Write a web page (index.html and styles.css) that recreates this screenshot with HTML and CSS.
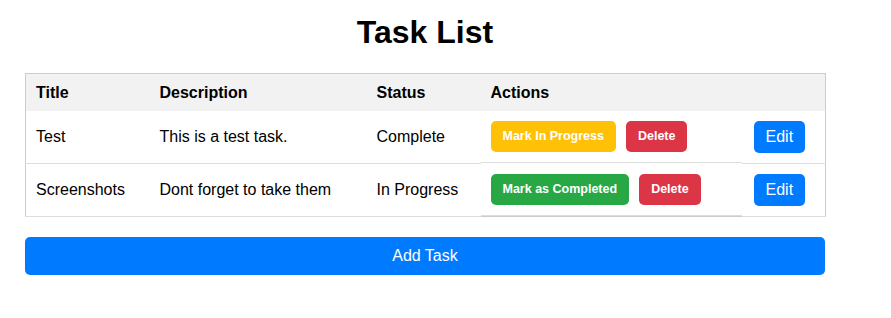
FILE: index.html
```html
<html lang="en">
  <head>
    <meta charset="UTF-8" />
    <meta name="viewport" content="width=device-width, initial-scale=1.0" />
    <title>Task List</title>

    <link rel="stylesheet" href="styles.css">
  </head>
  <body>
    <div class="container">
      <h1>Task List</h1>

      <table class="task-table">
        <colgroup>
          <col class="col-title" />
          <col class="col-desc" />
          <col class="col-status" />
          <col class="col-actions" />
          <col class="col-edit" />
        </colgroup>
        <thead>
          <tr>
            <th>Title</th>
            <th>Description</th>
            <th>Status</th>
            <th colspan="2">Actions</th>
          </tr>
        </thead>
        <tbody>
          <tr>
            <td>Test</td>
            <td>This is a test task.</td>
            <td>Complete</td>
            <td class="actions">
              <button class="btn btn-warning">Mark In Progress</button>
              <button class="btn btn-danger">Delete</button>
            </td>
            <td class="edit-cell"><button class="btn-edit">Edit</button></td>
          </tr>
          <tr>
            <td>Screenshots</td>
            <td>Dont forget to take them</td>
            <td>In Progress</td>
            <td class="actions">
              <button class="btn btn-success">Mark as Completed</button>
              <button class="btn btn-danger">Delete</button>
            </td>
            <td class="edit-cell"><button class="btn-edit">Edit</button></td>
          </tr>
        </tbody>
      </table>

      <button class="add-task">Add Task</button>
    </div>
  </body>
</html>
```

FILE: styles.css
```css
body {
  margin: 0;
  padding: 14px 25px;
  font-family: "Liberation Sans", Arial, sans-serif;
  color: #000;
}

.container {
  width: 800px;
}

h1 {
  text-align: center;
  font-size: 32px;
  margin: 0 0 22px;
}

.task-table {
  width: 100%;
  border-collapse: collapse;
  table-layout: fixed;
  border: 1px solid #ccc;
}

.col-title { width: 124px; }
.col-desc { width: 217px; }
.col-status { width: 114px; }
.col-actions { width: 261px; }
.col-edit { width: 84px; }

.task-table th,
.task-table td {
  padding: 10px;
  text-align: left;
  font-size: 16px;
}

.task-table th {
  padding-bottom: 9px;
  background-color: #f2f2f2;
}

.task-table td {
  border-bottom: 1px solid #ddd;
}

.task-table td.actions {
  display: flex;
  gap: 10px;
}

.task-table td.edit-cell {
  padding-left: 12px;
}

.btn {
  border: none;
  border-radius: 5px;
  padding: 8px 12px;
  font-family: inherit;
  font-size: 12.5px;
  line-height: 15px;
  font-weight: bold;
  color: white;
  cursor: pointer;
}

.btn-warning { background-color: #ffc107; }
.btn-success { background-color: #28a745; }
.btn-danger { background-color: #dc3545; }

.btn-edit {
  border: none;
  border-radius: 5px;
  padding: 7px 12px;
  font-family: inherit;
  font-size: 16px;
  line-height: 18px;
  color: white;
  background-color: #007bff;
  cursor: pointer;
}

.add-task {
  display: block;
  width: 100%;
  margin-top: 20px;
  padding: 10px;
  border: none;
  border-radius: 5px;
  font-family: inherit;
  font-size: 16px;
  color: white;
  background-color: #007bff;
  cursor: pointer;
}
```
